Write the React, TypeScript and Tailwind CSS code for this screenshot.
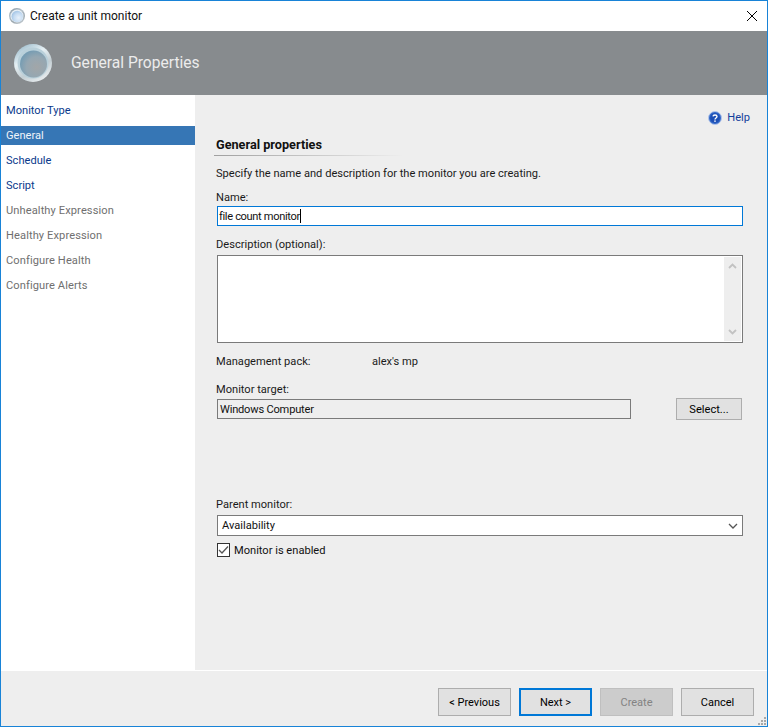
import React from "react";

const font = "font-['Roboto','Liberation_Sans',sans-serif]";

function Orb({ size, id, small }: { size: number; id: string; small?: boolean }) {
  return (
    <svg width={size} height={size} viewBox="0 0 38 38" className="shrink-0">
      <defs>
        <linearGradient id={`${id}r`} x1="0.2" y1="0" x2="0.8" y2="1">
          <stop offset="0" stopColor={small ? "#8a9aa6" : "#9dbdcd"} />
          <stop offset="0.35" stopColor={small ? "#b4c2cc" : "#e6f0f4"} />
          <stop offset="0.65" stopColor={small ? "#9aa6ae" : "#c3ced3"} />
          <stop offset="1" stopColor={small ? "#c6ced4" : "#eef2f4"} />
        </linearGradient>
        <radialGradient id={`${id}f`} cx="0.62" cy="0.62" r="0.7">
          <stop offset="0" stopColor={small ? "#e6f0fa" : "#a2a6a8"} />
          <stop offset="0.55" stopColor={small ? "#c6dcf2" : "#95a7b2"} />
          <stop offset="1" stopColor={small ? "#9cc0e2" : "#6f9ab3"} />
        </radialGradient>
      </defs>
      <circle cx="19" cy="19" r="19" fill={`url(#${id}r)`} />
      <circle cx="19" cy="19" r="15.5" fill={small ? "#e9f0f6" : "#b9d0da"} />
      <circle cx="19.5" cy="20" r="13.5" fill={`url(#${id}f)`} />
    </svg>
  );
}

function Btn({ label, kind }: { label: string; kind?: "primary" | "disabled" }) {
  const cls =
    kind === "primary"
      ? "border-2 border-[#0078d7] bg-[#e1e1e1] text-black"
      : kind === "disabled"
        ? "border border-[#bfbfbf] bg-[#cccccc] text-[#838383]"
        : "border border-[#adadad] bg-[#e1e1e1] text-black";
  return (
    <div className={`flex h-[28px] w-[73px] items-center justify-center pt-[2px] text-[11px] ${cls}`}>{label}</div>
  );
}

const nav: { label: string; state: "link" | "active" | "off" }[] = [
  { label: "Monitor Type", state: "link" },
  { label: "General", state: "active" },
  { label: "Schedule", state: "link" },
  { label: "Script", state: "link" },
  { label: "Unhealthy Expression", state: "off" },
  { label: "Healthy Expression", state: "off" },
  { label: "Configure Health", state: "off" },
  { label: "Configure Alerts", state: "off" },
];

function Label({ children, className = "" }: { children: React.ReactNode; className?: string }) {
  return <div className={`h-[16px] leading-[18px] text-[#1a1a1a] ${className}`}>{children}</div>;
}

export default function App() {
  return (
    <div className={`${font} flex h-[727px] w-[768px] flex-col overflow-hidden border border-[#1883d7] bg-[#eeeeee] text-[11.1px] text-[#111111]`}>
      {/* title bar */}
      <div className="flex h-[30px] shrink-0 items-center bg-white pl-[8px] pr-[10px]">
        <Orb size={16} id="a" small />
        <span className="ml-[5px] text-[12px] text-[#111111]">Create a unit monitor</span>
        <svg width="10" height="10" viewBox="0 0 10 10" className="ml-auto">
          <path d="M0 0L10 10M10 0L0 10" stroke="#000" strokeWidth="1" fill="none" />
        </svg>
      </div>
      {/* banner */}
      <div className="flex h-[64px] shrink-0 items-center bg-[#878b8e] pl-[13px]">
        <Orb size={38} id="b" />
        <span className="ml-[19px] pt-px text-[15.6px] text-[#ececec]">General Properties</span>
      </div>
      {/* body */}
      <div className="flex min-h-0 flex-1">
        <div className="flex w-[194px] shrink-0 flex-col gap-[6px] bg-white pt-[6px]">
          {nav.map((n) => (
            <div
              key={n.label}
              className={`h-[19px] pl-[5px] leading-[19px] ${
                n.state === "active"
                  ? "bg-[#3676b5] text-[#eef3f9]"
                  : n.state === "link"
                    ? "text-[#0a3a8c]"
                    : "text-[#6f6f6f] tracking-[0.1px]"
              }`}
            >
              {n.label}
            </div>
          ))}
        </div>
        <div className="flex min-w-0 flex-1 flex-col pl-[21px] pr-[24px]">
          <div className="mt-[15px] -mr-[7px] flex h-[15px] items-center justify-end gap-[5px]">
            <svg width="14" height="14" viewBox="0 0 14 14">
              <circle cx="7" cy="7" r="6.5" fill="#2f66c8" stroke="#b4c6ea" />
              <circle cx="7" cy="7" r="4.8" fill="#1d4fb5" />
              <path d="M5 5.4C5.2 3.6 9 3.6 9 5.5C9 7 7 6.9 7 8.4" stroke="#fff" strokeWidth="1.4" fill="none" />
              <rect x="6.3" y="9.4" width="1.4" height="1.5" fill="#fff" />
            </svg>
            <span className="pt-px text-[#12409c]">Help</span>
          </div>
          <div className="relative mt-[12px] h-[19px] text-[12.7px] leading-[16px] font-bold text-[#111111]">
            General properties
            <div className="absolute bottom-0 left-[-2px] h-px w-[190px] bg-gradient-to-r from-[#a0a0a0] to-transparent" />
          </div>
          <Label className="mt-[9px]">Specify the name and description for the monitor you are creating.</Label>
          <Label className="mt-[8px]">Name:</Label>
          <div className="mt-px ml-px flex h-[20px] w-[526px] items-center border border-[#0078d7] bg-white pl-[1px]">
            <span className="pt-[2px] tracking-[-0.35px]">file count monitor</span>
            <span className="h-[14px] w-px bg-black" />
          </div>
          <Label className="mt-[10px]">Description (optional):</Label>
          <div className="mt-[3px] ml-px flex h-[88px] w-[526px] justify-end border border-[#7a7a7a] bg-white p-px">
            <div className="flex w-[17px] flex-col items-center justify-between bg-[#eeeeee] py-[6px]">
              <svg width="9" height="6" viewBox="0 0 9 6">
                <path d="M1 5L4.5 1.5L8 5" stroke="#c2c2c2" strokeWidth="1.8" fill="none" />
              </svg>
              <svg width="9" height="6" viewBox="0 0 9 6">
                <path d="M1 1L4.5 4.5L8 1" stroke="#c2c2c2" strokeWidth="1.8" fill="none" />
              </svg>
            </div>
          </div>
          <div className="mt-[10px] flex h-[16px] leading-[18px] text-[#1a1a1a]">
            <span className="w-[156px]">Management pack:</span>
            <span>alex's mp</span>
          </div>
          <Label className="mt-[12px]">Monitor target:</Label>
          <div className="mt-px ml-px flex h-[22px] w-[525px] items-center justify-between">
            <div className="flex h-[20px] w-[414px] items-center border border-[#7a7a7a] bg-[#eeeeee] pt-[2px] pl-[2px] tracking-[-0.2px]">Windows Computer</div>
            <div className="flex h-[22px] w-[66px] items-center justify-center border border-[#adadad] bg-[#e1e1e1] pt-[2px] text-black">Select...</div>
          </div>
          <Label className="mt-[76px]">Parent monitor:</Label>
          <div className="mt-[3px] ml-px flex h-[21px] w-[526px] items-center justify-between border border-[#7a7a7a] bg-white pl-[4px] pr-[4px]">
            <span className="pt-px">Availability</span>
            <svg width="10" height="6" viewBox="0 0 10 6">
              <path d="M1 1L5 5L9 1" stroke="#555" strokeWidth="1.3" fill="none" />
            </svg>
          </div>
          <div className="mt-[7px] ml-px flex h-[14px] items-center gap-[4px]">
            <div className="flex h-[14px] w-[13px] items-center justify-center border border-[#333333] bg-white">
              <svg width="11" height="10" viewBox="0 0 11 10">
                <path d="M1 5L4 8L10 1.5" stroke="#555" strokeWidth="1.3" fill="none" />
              </svg>
            </div>
            <span className="pt-[2px]">Monitor is enabled</span>
          </div>
        </div>
      </div>
      {/* footer */}
      <div className="relative flex h-[56px] shrink-0 justify-end gap-[8px] border-t border-white pt-[17px] pr-[13px]">
        <Btn label="< Previous" />
        <Btn label="Next >" kind="primary" />
        <Btn label="Create" kind="disabled" />
        <Btn label="Cancel" />
        <svg width="10" height="10" viewBox="0 0 10 10" className="absolute right-0 bottom-0">
          <g fill="#a8a8a8">
            <rect x="7" y="1" width="2" height="2" />
            <rect x="4" y="4" width="2" height="2" />
            <rect x="7" y="4" width="2" height="2" />
            <rect x="1" y="7" width="2" height="2" />
            <rect x="4" y="7" width="2" height="2" />
            <rect x="7" y="7" width="2" height="2" />
          </g>
        </svg>
      </div>
    </div>
  );
}
